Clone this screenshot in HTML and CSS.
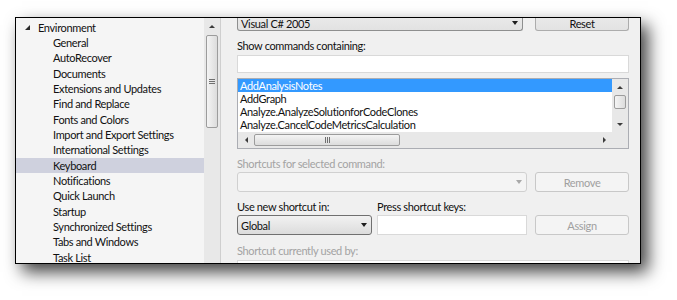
FILE: index.html
```html
<!DOCTYPE html>
<html lang="en">
<head>
  <meta charset="UTF-8">
  <title>Options - Keyboard</title>
  <link rel="stylesheet" href="styles.css">
</head>
<body>
<div class="dialog">
  <div class="nav">
    <ul class="tree">
      <li class="root"><span class="expander"></span>Environment</li>
      <li>General</li>
      <li>AutoRecover</li>
      <li>Documents</li>
      <li>Extensions and Updates</li>
      <li>Find and Replace</li>
      <li>Fonts and Colors</li>
      <li>Import and Export Settings</li>
      <li>International Settings</li>
      <li class="selected">Keyboard</li>
      <li>Notifications</li>
      <li>Quick Launch</li>
      <li>Startup</li>
      <li>Synchronized Settings</li>
      <li>Tabs and Windows</li>
      <li>Task List</li>
    </ul>
    <div class="vscroll tall">
      <div class="sb-btn"><span class="tri up"></span></div>
      <div class="thumb v long"><span class="grip"></span></div>
    </div>
  </div>

  <div class="pane">
    <div class="row first">
      <div class="combo scheme"><span>Visual C# 2005</span><span class="drop"></span></div>
      <div class="btn cut">Reset</div>
    </div>

    <div class="label">Show commands containing:</div>
    <div class="textbox"></div>

    <div class="listbox">
      <ul class="items">
        <li class="selected">AddAnalysisNotes</li>
        <li>AddGraph</li>
        <li>Analyze.AnalyzeSolutionforCodeClones</li>
        <li>Analyze.CancelCodeMetricsCalculation</li>
      </ul>
      <div class="vscroll">
        <div class="sb-btn"><span class="tri up"></span></div>
        <div class="thumb v short"></div>
        <div class="sb-fill"></div>
        <div class="sb-btn"><span class="tri down"></span></div>
      </div>
      <div class="hscroll">
        <div class="sb-btn"><span class="tri left"></span></div>
        <div class="thumb h"><span class="grip"></span></div>
        <div class="sb-fill"></div>
        <div class="sb-btn"><span class="tri right"></span></div>
      </div>
      <div class="corner"></div>
    </div>

    <div class="label disabled">Shortcuts for selected command:</div>
    <div class="row">
      <div class="combo off"><span></span><span class="drop"></span></div>
      <button class="btn off">Remove</button>
    </div>

    <div class="row bottom">
      <div class="fields">
        <div class="field scope">
          <div class="label">Use new shortcut in:</div>
          <div class="combo dark"><span>Global</span><span class="drop"></span></div>
        </div>
        <div class="field keys">
          <div class="label">Press shortcut keys:</div>
          <div class="textbox"></div>
        </div>
      </div>
      <button class="btn off">Assign</button>
    </div>

    <div class="label disabled gap8">Shortcut currently used by:</div>
    <div class="textbox"></div>
  </div>
</div>
</body>
</html>
```

FILE: styles.css
```css
* {
    box-sizing: border-box;
}

body {
    margin: 0;
    width: 677px;
    height: 300px;
    overflow: hidden;
    background: #fff;
    font-family: Lato, "Segoe UI", sans-serif;
    font-size: 11px;
    letter-spacing: -0.35px;
    color: #111;
}

.dialog {
    margin: 17px 0 0 15px;
    width: 626px;
    height: 247px;
    border: 1px solid #000;
    display: flex;
    background: #f0f0f0;
    box-shadow: 7px 8px 16px rgba(0, 0, 0, 0.75);
    overflow: hidden;
}

/* left tree */
.nav {
    width: 204px;
    display: flex;
    background: #f5f5f5;
}

.tree {
    list-style: none;
    margin: 0;
    padding: 1.5px 0 0;
    width: 188px;
}

.tree li {
    height: 15.35px;
    line-height: 15.35px;
    padding-left: 37px;
    white-space: nowrap;
}

.tree .root {
    padding-left: 9px;
    display: flex;
    align-items: center;
}

.tree .selected {
    background: #cfd1de;
}

.expander {
    width: 0;
    height: 0;
    border-left: 5px solid transparent;
    border-bottom: 5px solid #2a2a2a;
    margin-right: 8px;
}

/* scrollbars */
.vscroll {
    width: 16px;
    background: #e8e8e8;
    display: flex;
    flex-direction: column;
    align-items: center;
}

.hscroll {
    height: 16px;
    background: #e8e8e8;
    display: flex;
    align-items: center;
}

.sb-btn {
    width: 16px;
    height: 16px;
    display: flex;
    align-items: center;
    justify-content: center;
    flex: none;
}

.vscroll.tall .sb-btn {
    height: 17px;
}

.sb-fill {
    flex: 1;
}

.thumb {
    border: 1px solid #9c9c9c;
    border-radius: 2px;
    display: flex;
    align-items: center;
    justify-content: center;
    flex: none;
}

.thumb.v {
    width: 12px;
    background: linear-gradient(to right, #f4f4f4, #dcdcdc);
}

.thumb.long {
    height: 93px;
}

.thumb.short {
    height: 14px;
}

.thumb.h {
    width: 146px;
    height: 12px;
    background: linear-gradient(#f4f4f4, #dcdcdc);
}

.thumb.v .grip {
    width: 6px;
    height: 5px;
    background: repeating-linear-gradient(#707070 0 1px, transparent 1px 2px);
}

.thumb.h .grip {
    width: 5px;
    height: 6px;
    background: repeating-linear-gradient(to right, #707070 0 1px, transparent 1px 2px);
}

.tri {
    width: 0;
    height: 0;
}

.tri.up {
    border-left: 3px solid transparent;
    border-right: 3px solid transparent;
    border-bottom: 3px solid #3c3c3c;
}

.tri.down {
    border-left: 3px solid transparent;
    border-right: 3px solid transparent;
    border-top: 3px solid #3c3c3c;
}

.tri.left {
    border-top: 3px solid transparent;
    border-bottom: 3px solid transparent;
    border-right: 3px solid #3c3c3c;
}

.tri.right {
    border-top: 3px solid transparent;
    border-bottom: 3px solid transparent;
    border-left: 3px solid #3c3c3c;
}

/* right pane */
.pane {
    flex: 1;
    border-left: 1px solid #cfcfcf;
    padding: 0 11px 0 16px;
    overflow: hidden;
}

.row {
    display: flex;
    gap: 8px;
}

.row.first {
    gap: 12px;
}

.row.bottom {
    align-items: flex-end;
    margin-top: 7px;
}

.label {
    margin-top: 7px;
    line-height: 16px;
    white-space: nowrap;
}

.label.disabled {
    color: #a3a3a3;
}

.label.gap8 {
    margin-top: 8px;
}

.field .label {
    margin-top: 0;
}

.textbox {
    height: 18px;
    margin-top: 1px;
    background: #fff;
    border: 1px solid #d9d9d9;
}

.combo {
    width: 290px;
    height: 20px;
    border: 1px solid #8e8f8f;
    border-radius: 3px;
    background: linear-gradient(#f3f3f3, #e2e2e2);
    display: flex;
    align-items: center;
    justify-content: space-between;
    padding: 0 4px 0 3px;
}

/* the top of this row is cut off by the window edge */
.combo.scheme {
    width: 286px;
    height: 13px;
    border-top: none;
    border-radius: 0 0 3px 3px;
    background: linear-gradient(#e9e9e9, #e2e2e2);
    padding-bottom: 2px;
}

.combo.off {
    border-color: #d0d0d0;
    background: #f4f4f4;
}

.combo.dark {
    width: 135px;
    border-color: #707070;
    background: linear-gradient(#f2f2f2, #dcdcdc);
}

.drop {
    width: 0;
    height: 0;
    border-left: 3.5px solid transparent;
    border-right: 3.5px solid transparent;
    border-top: 4px solid #1e1e1e;
}

.combo.off .drop {
    border-top-color: #a8a8a8;
}

.btn {
    width: 94px;
    height: 22px;
    border: 1px solid #acacac;
    border-radius: 3px;
    background: linear-gradient(#f2f2f2, #e3e3e3);
    font: inherit;
    letter-spacing: inherit;
    color: #111;
    padding: 0;
}

.btn.cut {
    height: 13px;
    border-top: none;
    border-radius: 0 0 3px 3px;
    background: linear-gradient(#e9e9e9, #e3e3e3);
    display: flex;
    align-items: center;
    justify-content: center;
    padding-bottom: 2px;
}

.btn.off {
    height: 20px;
    border-color: #c8c8c8;
    background: #f4f4f4;
    color: #a0a0a0;
}

/* command list */
.listbox {
    margin-top: 5px;
    height: 71px;
    border: 1px solid #abadb3;
    background: #fff;
    display: grid;
    grid-template-columns: 1fr 16px;
    grid-template-rows: 1fr 16px;
}

.listbox .vscroll {
    width: 16px;
}

.items {
    list-style: none;
    margin: 0;
    padding: 0;
}

.items li {
    height: 13px;
    line-height: 13px;
    padding-left: 2px;
    white-space: nowrap;
}

.items .selected {
    background: #3399ff;
    color: #fff;
}

.corner {
    background: #e8e8e8;
}

.fields {
    width: 290px;
    display: flex;
    gap: 5px;
}

.field.scope {
    width: 135px;
}

.field.keys {
    flex: 1;
}

.field .textbox {
    height: 20px;
    margin-top: 0;
}
```
